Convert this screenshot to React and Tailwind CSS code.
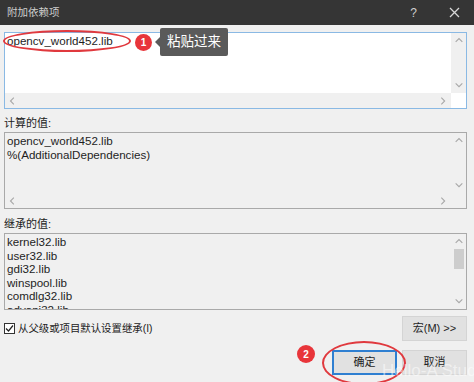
import React from 'react';

const font = { fontFamily: '"Liberation Sans", "Noto Sans CJK SC", sans-serif' };

function Chevron({ dir }) {
  const d = {
    up: 'M2 7 L6 3 L10 7',
    down: 'M2 4 L6 8 L10 4',
    left: 'M7 2 L3 6 L7 10',
    right: 'M4 2 L8 6 L4 10',
  }[dir];
  return (
    <svg width="10" height="10" viewBox="0 0 12 12" fill="none" stroke="#a8a8a8" strokeWidth="1.3">
      <path d={d} />
    </svg>
  );
}

function VScroll({ thumb }) {
  return (
    <div className="w-[15px] flex flex-col items-center bg-[#f0f0f0] py-[3px]">
      <Chevron dir="up" />
      {thumb ? <div className="w-[10px] h-[20px] bg-[#cdcdcd] mt-[2px]" /> : null}
      <div className="flex-1" />
      <Chevron dir="down" />
    </div>
  );
}

function HScroll() {
  return (
    <div className="h-[15px] flex items-center justify-between bg-[#f0f0f0] px-[3px] mr-[15px]">
      <Chevron dir="left" />
      <Chevron dir="right" />
    </div>
  );
}

function Box({ lines, active, hscroll, thumb, bg }) {
  return (
    <div
      className={`h-[77px] border flex flex-col overflow-hidden ${
        active ? 'border-[#8ab9e4]' : 'border-[#a9a9a9]'
      } ${bg}`}
    >
      <div className="flex-1 flex min-h-0">
        <div className="flex-1 px-[2px] pt-[1px] text-[11.6px] leading-[13.6px] text-[#1e1e1e] overflow-hidden">
          {lines.map((l, i) => (
            <div key={i} className="whitespace-nowrap">{l}</div>
          ))}
        </div>
        <VScroll thumb={thumb} />
      </div>
      {hscroll ? <HScroll /> : null}
    </div>
  );
}

function Button({ children, primary }) {
  return (
    <div
      className={`w-[65px] h-[25px] flex items-center justify-center text-[11px] text-[#1e1e1e] bg-[#e1e1e1] border ${
        primary ? 'border-[#2f7fd1] border-2' : 'border-[#d4d4d4]'
      }`}
    >
      {children}
    </div>
  );
}

export default function App() {
  return (
    <div className="w-[474px] h-[382px] bg-[#f0f0f0] relative overflow-hidden flex flex-col" style={font}>
      {/* title bar */}
      <div className="h-[25px] bg-[#353535] flex items-center pl-[7px] pr-[14px] text-[10.5px] text-[#cfcfcf]">
        <span className="flex-1">附加依赖项</span>
        <span className="mr-[32px] text-[12px]">?</span>
        <svg width="11" height="11" viewBox="0 0 11 11" stroke="#d8d8d8" strokeWidth="1.3">
          <path d="M1 1 L10 10 M10 1 L1 10" />
        </svg>
      </div>

      <div className="flex flex-col px-[4px] pr-[7px] pt-[7px]">
        <Box lines={['opencv_world452.lib']} active hscroll bg="bg-white" />

        <div className="mt-[5px] h-[18px] text-[11px] text-[#222] flex items-center">计算的值:</div>
        <Box
          lines={['opencv_world452.lib', '%(AdditionalDependencies)']}
          hscroll
          bg="bg-[#f0f0f0]"
        />

        <div className="mt-[6px] h-[18px] text-[11px] text-[#222] flex items-center">继承的值:</div>
        <Box
          lines={['kernel32.lib', 'user32.lib', 'gdi32.lib', 'winspool.lib', 'comdlg32.lib', 'advapi32.lib']}
          thumb
          bg="bg-[#f0f0f0]"
        />

        <div className="mt-[6px] flex items-start justify-between">
          <div className="flex items-center gap-[3px] mt-[5px] text-[10.4px] text-[#222]">
            <div className="w-[11px] h-[11px] border border-[#333] bg-white flex items-center justify-center">
              <svg width="9" height="9" viewBox="0 0 9 9" fill="none" stroke="#222" strokeWidth="1.2">
                <path d="M1 4.5 L3.5 7 L8 1.5" />
              </svg>
            </div>
            <span>从父级或项目默认设置继承(I)</span>
          </div>
          <Button>宏(M) &gt;&gt;</Button>
        </div>

        <div className="mt-[9px] flex justify-end gap-[5px]">
          <Button primary>确定</Button>
          <Button>取消</Button>
        </div>
      </div>

      {/* annotations */}
      <div className="absolute left-[3px] top-[30px] w-[128px] h-[22px] border-2 border-[#e0393e] rounded-[50%]" />
      <div className="absolute left-[135px] top-[34px] w-[17px] h-[17px] rounded-full bg-[#e8353a] text-white text-[10px] font-bold flex items-center justify-center">1</div>
      <div className="absolute left-[160px] top-[28px] w-[68px] h-[28px] bg-[#5a5a5a] rounded-[2px] text-white text-[13.5px] flex items-center justify-center">
        粘贴过来
        <div className="absolute -left-[5px] top-[9px] w-0 h-0 border-y-[5px] border-y-transparent border-r-[5px] border-r-[#5a5a5a]" />
      </div>

      <div className="absolute left-[297px] top-[345px] w-[18px] h-[18px] rounded-full bg-[#e8353a] text-white text-[10px] font-bold flex items-center justify-center">2</div>
      <div className="absolute left-[322px] top-[341px] w-[84px] h-[44px] border-2 border-[#e0393e] rounded-[50%]" />

      <div className="absolute left-[382px] top-[358px] text-[17px] text-white/50 whitespace-nowrap">Hello-A Studio</div>
    </div>
  );
}
